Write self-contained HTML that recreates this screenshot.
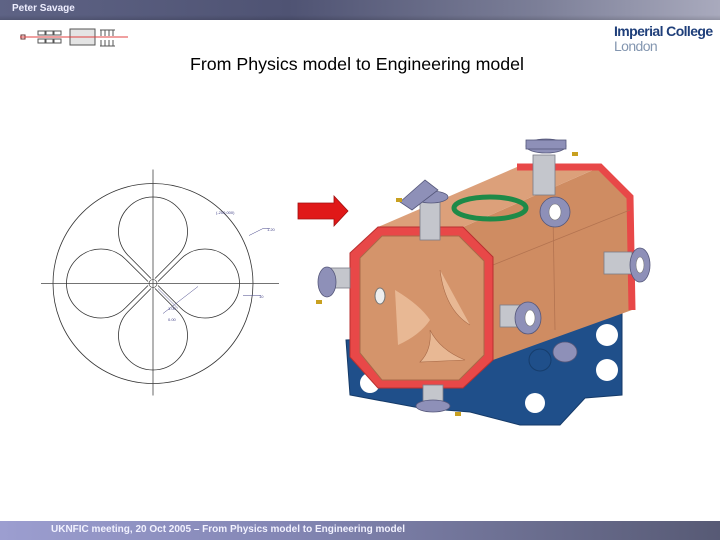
<!DOCTYPE html>
<html><head><meta charset="utf-8"><style>
html,body{margin:0;padding:0;width:720px;height:540px;overflow:hidden;background:#fff;font-family:"Liberation Sans",sans-serif}
.hdr{position:absolute;left:0;top:0;width:720px;height:20px;background:linear-gradient(90deg,#5e6385 0%,#4f5373 40%,#7c7f98 75%,#a9aabd 100%)}
.hdr::after{content:"";position:absolute;left:0;right:0;bottom:0;height:5px;background:linear-gradient(#0000,#0002)}
.hdr span{position:absolute;left:12px;top:3px;color:#eef;font-size:10px;font-weight:bold}
.ftr{position:absolute;left:0;top:521px;width:720px;height:19px;background:linear-gradient(90deg,#9c9ed0 0%,#8386b4 40%,#6a6d8e 75%,#575a75 100%)}
.ftr span{position:absolute;left:51px;top:3px;color:#f2f2ff;font-size:10px;font-weight:bold}
.title{position:absolute;left:0;width:714px;top:54px;text-align:center;font-size:17.8px;color:#000}
.logo{position:absolute;left:614px;top:24px;font-size:14px;line-height:15px;letter-spacing:-0.6px;font-weight:bold}
</style></head><body>
<div class="hdr"><span>Peter Savage</span></div>
<div class="title">From Physics model to Engineering model</div>
<div class="logo"><div style="color:#1f3f7a">Imperial College</div><div style="color:#8396b0;font-weight:normal">London</div></div>
<svg width="720" height="540" style="position:absolute;left:0;top:0">
 <g fill="none" stroke="#555" stroke-width="1">
  <rect x="21" y="35" width="4" height="4" stroke="#633"/>
  <rect x="38" y="31" width="7" height="4"/><rect x="46" y="31" width="7" height="4"/><rect x="54" y="31" width="7" height="4"/>
  <rect x="38" y="39" width="7" height="4"/><rect x="46" y="39" width="7" height="4"/><rect x="54" y="39" width="7" height="4"/>
  <rect x="70" y="29" width="25" height="16" fill="#e4e4e4"/>
  <path d="M101 30v6M105 30v6M109 30v6M113 30v6M101 40v6M105 40v6M109 40v6M113 40v6M100 30h15M100 46h15"/>
 </g>
 <line x1="20" y1="37" x2="128" y2="37" stroke="#e04040" stroke-width="1"/>
 <g transform="translate(153,283.5)" fill="none" stroke="#333" stroke-width="0.8">
  <circle r="100"/>
  <line x1="-112" y1="0" x2="126" y2="0" stroke="#444"/>
  <line x1="0" y1="-114" x2="0" y2="112" stroke="#444"/>
  <g id="p"><path d="M2,-5 L24.4,-27.6 A34.5 34.5 0 1 0 -24.4,-27.6 L-2,-5"/></g>
  <use href="#p" transform="rotate(90)"/>
  <use href="#p" transform="rotate(180)"/>
  <use href="#p" transform="rotate(270)"/>
  <circle r="4" stroke-width="0.6"/>
  <g stroke="#448" stroke-width="0.5"><path d="M96,-48 L110,-55 H117"/><path d="M90,12 H108"/><path d="M5,5 L25,25 M10,30 L45,3"/></g>
 </g>
 <g font-size="4" fill="#448"><text x="216" y="214">(-200,000)</text><text x="267" y="231">1.20</text><text x="259" y="298">10</text><text x="168" y="321">0.00</text><text x="168" y="310">1.00</text></g>
 <polygon points="298,203 334,203 334,196 348,211 334,226 334,219 298,219" fill="#e01818" stroke="#a01010" stroke-width="0.8"/>
 <polygon points="346,340 470,335 545,300 622,300 622,395 585,398 560,425 520,425 470,412 420,408 350,395" fill="#1f4f8a" stroke="#153a68"/>
 <circle cx="370" cy="383" r="10" fill="#fff"/><circle cx="535" cy="403" r="10" fill="#fff"/>
 <circle cx="607" cy="335" r="11" fill="#fff"/><circle cx="607" cy="370" r="11" fill="#fff"/>
 <circle cx="540" cy="360" r="11" fill="none" stroke="#163d6c"/>
 <polygon points="463,227 600,167 630,197 632,310 493,360 493,257" fill="#cf8c62"/>
 <polygon points="378,227 517,167 600,167 463,227" fill="#dca07a"/>
 <path d="M517,167 H600 L630,197 L632,310" fill="none" stroke="#e84848" stroke-width="7"/>
 <line x1="553" y1="215" x2="555" y2="330" stroke="#b37350" stroke-width="0.8"/>
 <line x1="493" y1="265" x2="630" y2="210" stroke="#b37350" stroke-width="0.8"/>
 <polygon points="350,253 378,227 463,227 493,257 493,360 463,388 378,388 350,357" fill="#e84848" stroke="#b83030"/>
 <polygon points="360,258 382,236 459,236 484,261 484,355 459,380 382,380 360,353" fill="#d4946b" stroke="#a86a48"/>
 <path d="M395,290 Q420,305 430,320 Q420,335 398,345 Z" fill="#e8b894"/>
 <path d="M440,270 Q445,310 470,325 M430,330 Q440,350 465,360 L420,362 Q432,350 430,330" fill="#e8b894" stroke="#a86a48" stroke-width="0.6"/>
 <ellipse cx="380" cy="296" rx="5" ry="8" fill="#eee" stroke="#777"/>
 <ellipse cx="490" cy="208" rx="36" ry="11" fill="none" stroke="#1e8a48" stroke-width="5"/>
 <g fill="#c4c6cc" stroke="#7a7c88" stroke-width="0.8">
  <rect x="420" y="195" width="20" height="45"/>
  <rect x="533" y="155" width="22" height="40"/>
  <rect x="423" y="385" width="20" height="25"/>
  <rect x="604" y="252" width="28" height="22"/>
  <rect x="500" y="305" width="25" height="22"/>
  <rect x="330" y="268" width="20" height="20"/>
 </g>
 <g fill="#8e90b8" stroke="#55577a" stroke-width="0.8">
  <ellipse cx="431" cy="197" rx="17" ry="6"/>
  <path d="M400,202 L425,180 L438,190 L412,210 Z"/>
  <ellipse cx="546" cy="146" rx="20" ry="7"/><rect x="526" y="140" width="40" height="9"/>
  <ellipse cx="433" cy="406" rx="17" ry="6"/>
  <ellipse cx="640" cy="265" rx="10" ry="17"/>
  <ellipse cx="555" cy="212" rx="15" ry="15"/>
  <ellipse cx="528" cy="318" rx="13" ry="16"/>
  <ellipse cx="565" cy="352" rx="12" ry="10"/>
  <ellipse cx="327" cy="282" rx="9" ry="15"/>
 </g>
 <g fill="#fff" stroke="#777" stroke-width="0.6">
  <ellipse cx="555" cy="212" rx="6" ry="8"/><ellipse cx="640" cy="265" rx="4" ry="8"/><ellipse cx="530" cy="318" rx="5" ry="8"/>
 </g>
 <g fill="#c8a020"><rect x="572" y="152" width="6" height="4"/><rect x="396" y="198" width="6" height="4"/><rect x="316" y="300" width="6" height="4"/><rect x="455" y="412" width="6" height="4"/></g>
</svg>
<div class="ftr"><span>UKNFIC meeting, 20 Oct 2005 – From Physics model to Engineering model</span></div>
</body></html>
